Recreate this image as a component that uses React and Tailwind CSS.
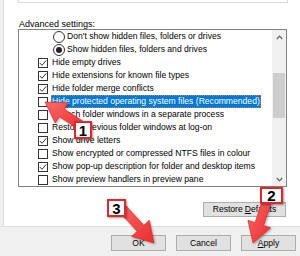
const rows = [
  { t: 'radio', on: false, label: "Don't show hidden files, folders or drives" },
  { t: 'radio', on: true, label: 'Show hidden files, folders and drives' },
  { t: 'check', on: true, label: 'Hide empty drives' },
  { t: 'check', on: true, label: 'Hide extensions for known file types' },
  { t: 'check', on: true, label: 'Hide folder merge conflicts' },
  { t: 'check', on: false, label: 'Hide protected operating system files (Recommended)', sel: true },
  { t: 'check', on: false, label: 'Launch folder windows in a separate process' },
  { t: 'check', on: false, label: 'Restore previous folder windows at log-on' },
  { t: 'check', on: true, label: 'Show drive letters' },
  { t: 'check', on: false, label: 'Show encrypted or compressed NTFS files in colour' },
  { t: 'check', on: true, label: 'Show pop-up description for folder and desktop items' },
  { t: 'check', on: false, label: 'Show preview handlers in preview pane' },
];

// arrow polygon from tail to tip
function arrowPts([x1, y1], [x2, y2], shaft = 9, head = 24, headLen = 20) {
  const dx = x2 - x1, dy = y2 - y1;
  const len = Math.hypot(dx, dy);
  const ux = dx / len, uy = dy / len;
  const nx = -uy, ny = ux;
  const bx = x2 - ux * headLen, by = y2 - uy * headLen;
  const p = (x, y) => `${x.toFixed(1)},${y.toFixed(1)}`;
  return [
    p(x1 + nx * shaft / 2, y1 + ny * shaft / 2),
    p(bx + nx * shaft / 2, by + ny * shaft / 2),
    p(bx + nx * head / 2, by + ny * head / 2),
    p(x2, y2),
    p(bx - nx * head / 2, by - ny * head / 2),
    p(bx - nx * shaft / 2, by - ny * shaft / 2),
    p(x1 - nx * shaft / 2, y1 - ny * shaft / 2),
  ].join(' ');
}

function Check({ on }) {
  return (
    <span className="w-[10px] h-[10px] border border-[#333] bg-white shrink-0 flex items-center justify-center">
      {on && (
        <svg width="8" height="8" viewBox="0 0 8 8">
          <polyline points="0.8,4 3,6.3 7.3,1.3" fill="none" stroke="#222" strokeWidth="0.9" />
        </svg>
      )}
    </span>
  );
}

function Radio({ on }) {
  return (
    <span className="w-[12px] h-[12px] rounded-full border border-[#333] bg-white shrink-0 flex items-center justify-center">
      {on && <span className="w-[6px] h-[6px] rounded-full bg-[#222]" />}
    </span>
  );
}

function Badge({ n, className }) {
  return (
    <div className={`absolute bg-white border-2 border-[#e3262c] flex items-center justify-center text-[15px] font-bold text-black leading-none shadow-[1px_1px_2px_rgba(0,0,0,0.4)] ${className}`}>
      {n}
    </div>
  );
}

export default function App() {
  return (
    <div className="relative w-[300px] h-[256px] overflow-hidden bg-white text-black" style={{ fontFamily: '"Liberation Sans", Arial, sans-serif' }}>
      <div className="flex h-[226px]">
        <div className="w-[4px] bg-[#f0f0f0] border-r border-[#d9d9d9] shrink-0" />
        <div className="flex-1 flex flex-col">
          {/* previous group box edge */}
          <div className="ml-[14px] mr-[12px] h-[3px] border-x border-b border-[#dcdcdc]" />
          <div className="ml-[15px] mt-[16px] text-[9px] leading-[10px]">Advanced settings:</div>
          {/* list */}
          <div className="ml-[14px] mr-[13px] mt-[0px] h-[158px] border border-[#828282] flex">
            <div className="flex-1 flex flex-col text-[8.6px]">
              {rows.map((r, i) => (
                <div key={i} className="h-[13px] flex items-center">
                  {r.t === 'radio' ? (
                    <>
                      <span className="w-[34px] shrink-0" />
                      <Radio on={r.on} />
                      <span className="ml-[1px] px-[1px] whitespace-nowrap">{r.label}</span>
                    </>
                  ) : (
                    <>
                      <span className="w-[19px] shrink-0" />
                      <Check on={r.on} />
                      <span className={`ml-[3px] px-[1px] h-[13px] leading-[13px] whitespace-nowrap ${r.sel ? 'bg-[#0078d7] text-white outline outline-1 outline-dotted outline-[#c08040] -outline-offset-1' : ''}`}>
                        {r.label}
                      </span>
                    </>
                  )}
                </div>
              ))}
            </div>
            {/* scrollbar */}
            <div className="w-[14px] bg-[#f0f0f0] flex flex-col items-center shrink-0">
              <div className="h-[14px] flex items-center justify-center">
                <svg width="7" height="5" viewBox="0 0 7 5"><polyline points="0.8,4 3.5,1.2 6.2,4" fill="none" stroke="#606060" strokeWidth="1.2" /></svg>
              </div>
              <div className="mt-[29px] w-[12px] h-[45px] bg-[#cdcdcd]" />
              <div className="flex-1" />
              <div className="h-[14px] flex items-center justify-center">
                <svg width="7" height="5" viewBox="0 0 7 5"><polyline points="0.8,1 3.5,3.8 6.2,1" fill="none" stroke="#606060" strokeWidth="1.2" /></svg>
              </div>
            </div>
          </div>
          <div className="flex justify-end mr-[14px] mt-[15px]">
            <div className="w-[83px] h-[15px] bg-[#e1e1e1] border border-[#adadad] text-[8.6px] flex items-center justify-center">
              Restore <span className="underline ml-[2px]">D</span>efaults
            </div>
          </div>
        </div>
      </div>
      {/* bottom button bar */}
      <div className="h-[30px] bg-[#f0f0f0] border-t border-[#dfdfdf] flex items-start pt-[8px] pl-[111px] gap-[10px] text-[8.6px]">
        <div className="w-[55px] h-[16px] bg-[#e1e1e1] border border-[#adadad] flex items-center justify-center">OK</div>
        <div className="w-[55px] h-[16px] bg-[#e1e1e1] border border-[#adadad] flex items-center justify-center">Cancel</div>
        <div className="w-[55px] h-[16px] bg-[#e1e1e1] border border-[#adadad] flex items-center justify-center">
          <span className="underline">A</span>pply
        </div>
      </div>

      {/* annotation arrows */}
      <svg className="absolute inset-0 pointer-events-none" width="300" height="256" viewBox="0 0 300 256">
        <defs>
          <linearGradient id="ag" x1="0" y1="0" x2="1" y2="1">
            <stop offset="0" stopColor="#f86a6a" />
            <stop offset="1" stopColor="#ea2d2d" />
          </linearGradient>
          <filter id="sh" x="-20%" y="-20%" width="140%" height="140%">
            <feDropShadow dx="1" dy="1" stdDeviation="1" floodColor="#000" floodOpacity="0.35" />
          </filter>
        </defs>
        <polygon points={arrowPts([82, 126], [45, 102])} fill="url(#ag)" stroke="#d42020" strokeWidth="0.6" filter="url(#sh)" />
        <polygon points={arrowPts([120, 206], [154, 243])} fill="url(#ag)" stroke="#d42020" strokeWidth="0.6" filter="url(#sh)" />
        <polygon points={arrowPts([268, 198], [253, 243])} fill="url(#ag)" stroke="#d42020" strokeWidth="0.6" filter="url(#sh)" />
      </svg>

      <Badge n="1" className="left-[74px] top-[121px] w-[18px] h-[18px]" />
      <Badge n="3" className="left-[107px] top-[199px] w-[19px] h-[18px]" />
      <Badge n="2" className="left-[260px] top-[187px] w-[23px] h-[17px]" />
    </div>
  );
}
